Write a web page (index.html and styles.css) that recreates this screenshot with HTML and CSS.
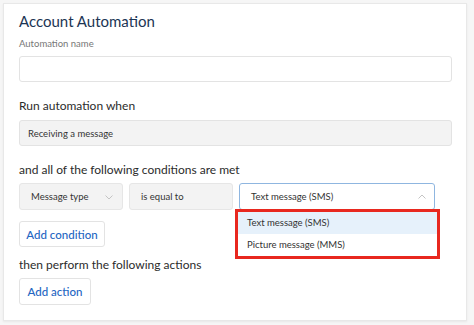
FILE: index.html
```html
<!DOCTYPE html>
<html>
<head>
<meta charset="utf-8">
<link rel="stylesheet" href="styles.css">
</head>
<body>
<div class="card">
  <h1 class="title">Account Automation</h1>
  <div class="label">Automation name</div>
  <div class="input"></div>
  <div class="section">Run automation when</div>
  <div class="input gray"><span>Receiving a message</span></div>
  <div class="section">and all of the following conditions are met</div>
  <div class="row">
    <div class="select s1"><span>Message type</span>
      <svg class="chev" width="8" height="5" viewBox="0 0 8 5"><path d="M0.5 0.5 L4 4 L7.5 0.5" fill="none" stroke="#c4c4c4" stroke-width="1"/></svg>
    </div>
    <div class="select s2"><span>is equal to</span></div>
    <div class="select s3 open"><span>Text message (SMS)</span>
      <svg class="chev" width="8" height="5" viewBox="0 0 8 5"><path d="M0.5 4.5 L4 1 L7.5 4.5" fill="none" stroke="#c4c4c4" stroke-width="1"/></svg>
      <div class="menu">
        <div class="opt active">Text message (SMS)</div>
        <div class="opt">Picture message (MMS)</div>
      </div>
    </div>
  </div>
  <button class="btn cond">Add condition</button>
  <div class="section then">then perform the following actions</div>
  <button class="btn act">Add action</button>
</div>
</body>
</html>
```
FILE: styles.css
```css
html, body { margin: 0; padding: 0; }
body {
  background: #f6f6f6;
  font-family: Lato, "Open Sans", sans-serif;
  width: 474px;
  height: 325px;
  overflow: hidden;
  padding: 3px 0 0 3px;
  box-sizing: border-box;
}
.card {
  width: 464px;
  height: 318px;
  box-sizing: border-box;
  background: #fff;
  border: 1px solid #e8e8e8;
  box-shadow: 0 1px 2px rgba(0,0,0,0.06);
  padding: 7px 14px 0 15px;
}
.title {
  margin: 0;
  font-size: 15px;
  line-height: 20px;
  font-weight: 400;
  color: #1c3554;
}
.label {
  margin-top: 6px;
  font-size: 9.5px;
  line-height: 14px;
  color: #777;
}
.input {
  margin-top: 5px;
  height: 26px;
  box-sizing: border-box;
  border: 1px solid #e3e3e3;
  border-radius: 3px;
  background: #fff;
  display: flex;
  align-items: center;
  padding-left: 8px;
  font-size: 9.5px;
  color: #333;
}
.input.gray { background: #f3f3f3; margin-top: 6px; }
.section {
  margin-top: 16px;
  font-size: 12px;
  line-height: 16px;
  color: #2b2b2b;
}
.row {
  margin-top: 5px;
  display: flex;
  gap: 6px;
  height: 27px;
}
.select {
  position: relative;
  box-sizing: border-box;
  height: 27px;
  border: 1px solid #e6e6e6;
  border-radius: 3px;
  background: #f3f3f3;
  display: flex;
  align-items: center;
  padding-left: 11px;
  font-size: 9.5px;
  color: #333;
}
.s1 { width: 104px; }
.s2 { width: 104px; }
.s3 { width: 196px; background: #fff; border-color: #8fb6e0; }
.chev { position: absolute; right: 9px; top: 11px; }
.s3 .chev { right: 8px; top: 10px; }
.menu {
  position: absolute;
  left: -5px;
  top: 25px;
  width: 205px;
  box-sizing: border-box;
  border: 3px solid #e8281f;
  background: #fff;
  padding: 0;
  z-index: 2;
}
.opt {
  height: 22px;
  line-height: 22px;
  padding-left: 9px;
  font-size: 9.5px;
  color: #333;
}
.opt.active { background: #e6f1fb; }
.btn {
  display: block;
  box-sizing: border-box;
  background: #fff;
  border: 1px solid #e3e3e3;
  border-radius: 3px;
  color: #2466c2;
  font-family: Lato, "Open Sans", sans-serif;
  font-size: 11.5px;
  font-weight: 500;
  padding: 0;
  white-space: nowrap;
  text-align: center;
  height: 26px;
}
.cond { margin-top: 11px; width: 86px; }
.then { margin-top: 10px; }
.act { margin-top: 5px; width: 72px; height: 27px; }
```
